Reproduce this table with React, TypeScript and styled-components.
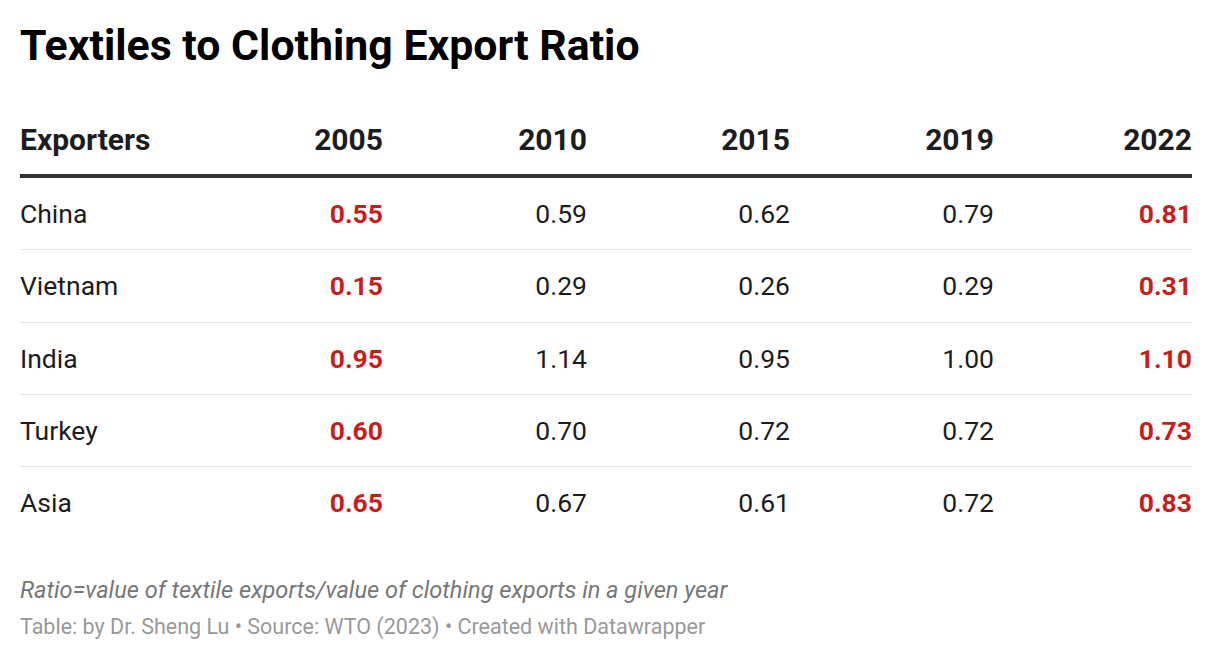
import React from "react";
import styled, { createGlobalStyle } from "styled-components";

const Global = createGlobalStyle`
  html, body { margin: 0; padding: 0; background: #fff; }
  body { font-family: Roboto, "Liberation Sans", sans-serif; color: #1d1d1d; }
`;

const Page = styled.div`
  padding: 18px 20px 0 20px;
  width: 1172px;
`;

const Title = styled.h1`
  margin: 0;
  font-size: 42.8px;
  font-weight: 700;
  line-height: 54px;
  color: #000;
`;

const Table = styled.div`
  margin-top: 50px;
  display: grid;
  grid-template-columns: 159px 204px 204px 203px 204px 198px;
`;

const HeadCell = styled.div<{ $left?: boolean }>`
  font-size: 30px;
  font-weight: 700;
  line-height: 36px;
  padding-bottom: 16px;
  text-align: ${(p) => (p.$left ? "left" : "right")};
  border-bottom: 4px solid #333;
  color: #1d1d1d;
`;

const Cell = styled.div<{ $left?: boolean; $hl?: boolean; $last?: boolean }>`
  font-size: 26.5px;
  line-height: 71.3px;
  height: 71.3px;
  text-align: ${(p) => (p.$left ? "left" : "right")};
  font-weight: ${(p) => (p.$hl ? 700 : 400)};
  color: ${(p) => (p.$hl ? "#c71e1d" : "#1d1d1d")};
  border-bottom: ${(p) => (p.$last ? "none" : "1px solid #e6e6e6")};
`;

const Notes = styled.div`
  margin-top: 37px;
  display: flex;
  flex-direction: column;
  gap: 8px;
`;

const Note = styled.div`
  font-size: 23.6px;
  font-style: italic;
  color: #777;
  line-height: 30px;
`;

const Source = styled.div`
  font-size: 21.5px;
  color: #999;
  line-height: 28px;
`;

const years = ["2005", "2010", "2015", "2019", "2022"];
const rows: [string, string[]][] = [
  ["China", ["0.55", "0.59", "0.62", "0.79", "0.81"]],
  ["Vietnam", ["0.15", "0.29", "0.26", "0.29", "0.31"]],
  ["India", ["0.95", "1.14", "0.95", "1.00", "1.10"]],
  ["Turkey", ["0.60", "0.70", "0.72", "0.72", "0.73"]],
  ["Asia", ["0.65", "0.67", "0.61", "0.72", "0.83"]],
];

export default function App() {
  return (
    <Page>
      <Global />
      <Title>Textiles to Clothing Export Ratio</Title>
      <Table>
        <HeadCell $left>Exporters</HeadCell>
        {years.map((y) => (
          <HeadCell key={y}>{y}</HeadCell>
        ))}
        {rows.map(([name, vals], ri) => (
          <React.Fragment key={name}>
            <Cell $left $last={ri === rows.length - 1}>{name}</Cell>
            {vals.map((v, i) => (
              <Cell key={i} $hl={i === 0 || i === 4} $last={ri === rows.length - 1}>
                {v}
              </Cell>
            ))}
          </React.Fragment>
        ))}
      </Table>
      <Notes>
        <Note>Ratio=value of textile exports/value of clothing exports in a given year</Note>
        <Source>Table: by Dr. Sheng Lu • Source: WTO (2023) • Created with Datawrapper</Source>
      </Notes>
    </Page>
  );
}
